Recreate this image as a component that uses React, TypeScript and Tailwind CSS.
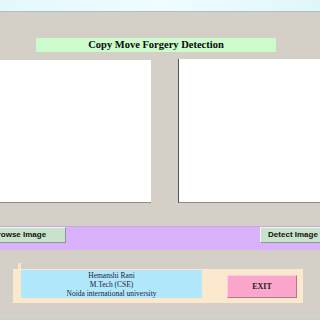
export default function App() {
  return (
    <div className="w-[320px] h-[320px] overflow-hidden bg-[#d4d0c8] flex flex-col">
      {/* window top strip */}
      <div className="h-[12px] shrink-0 bg-gradient-to-r from-[#e4f8fc] via-[#f0fcff] to-[#e0f6fb] border-b border-[#a9bfc6]" />

      {/* title */}
      <div className="mt-[26px] ml-[36px] w-[240px] h-[14px] shrink-0 bg-[#ccfccc] flex items-center justify-center">
        <span className="font-['Liberation_Serif',serif] font-bold text-[10.5px] leading-none text-[#0a0a0a]">
          Copy Move Forgery Detection
        </span>
      </div>

      {/* image panes */}
      <div className="mt-[7px] h-[144px] shrink-0 flex">
        <div className="w-[151px] mt-[1px] bg-white border-b border-[#8c8c8c]" />
        <div className="ml-[27px] flex-1 bg-white border-l border-[#555] border-b border-b-[#8c8c8c]" />
      </div>

      {/* action strip */}
      <div className="mt-[23px] h-[24px] shrink-0 bg-[#dab2fb] border-t border-[#c8a8e0] flex items-start justify-between">
        <button className="-ml-[28px] w-[94px] h-[16px] bg-[#c8e2cc] border border-[#8a9a8e] border-t-[#eef6ee] border-l-[#eef6ee] font-['Liberation_Sans',sans-serif] font-bold text-[8px] leading-none text-[#111] flex items-center justify-center">
          Browse Image
        </button>
        <button className="w-[66px] mr-[-6px] h-[16px] bg-[#c8e2cc] border border-[#8a9a8e] border-t-[#eef6ee] border-l-[#eef6ee] font-['Liberation_Sans',sans-serif] font-bold text-[8px] leading-none text-[#111] flex items-center justify-center">
          Detect Image
        </button>
      </div>

      {/* credits panel */}
      <div className="mt-[13px] ml-[18px] w-[3px] h-[6px] shrink-0 bg-[#f8e6cc]" />
      <div className="ml-[13px] w-[290px] h-[34px] shrink-0 bg-[#fce8cc] flex items-start">
        <div className="ml-[8px] mt-[1px] w-[181px] h-[28px] bg-[#b2e8fc] flex flex-col items-center justify-center font-['Liberation_Serif',serif] text-[7.5px] leading-[9px] text-[#1a1a3a]">
          <span>Hemanshi Rani</span>
          <span>M.Tech (CSE)</span>
          <span>Noida international university</span>
        </div>
        <button className="ml-[25px] mt-[6px] w-[70px] h-[23px] bg-[#fca6cc] border border-[#b07890] border-t-[#fcd0e4] border-l-[#fcd0e4] font-['Liberation_Serif',serif] font-bold text-[8px] leading-none text-[#222] flex items-center justify-center">
          EXIT
        </button>
      </div>

      <div className="mt-[13px] h-[1px] shrink-0 bg-[#c8d8dc]" />
    </div>
  );
}
